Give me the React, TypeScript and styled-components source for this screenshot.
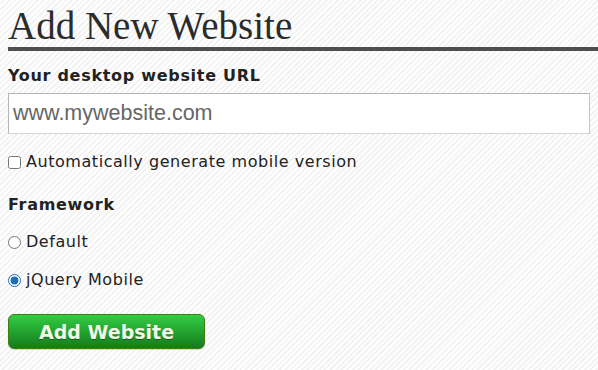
import React from "react";
import styled, { createGlobalStyle } from "styled-components";

const GlobalStyle = createGlobalStyle`
  html, body {
    margin: 0;
    padding: 0;
  }
  body {
    width: 598px;
    height: 370px;
    overflow: hidden;
    font-family: "DejaVu Sans", Verdana, sans-serif;
    color: #222;
    background-color: #fff;
    background-image: repeating-linear-gradient(
      135deg,
      #fff 0px,
      #fff 2px,
      #f3f3f3 2px,
      #f3f3f3 4px
    );
  }
`;

const Page = styled.form`
  padding: 0 0 0 8px;
  display: flex;
  flex-direction: column;
  align-items: flex-start;
`;

const Title = styled.h1`
  align-self: stretch;
  margin: 0;
  padding: 5px 0 0;
  font-family: "Liberation Serif", Georgia, serif;
  font-weight: normal;
  font-size: 39px;
  line-height: 42px;
  color: #2b2b2b;
  border-bottom: 4px solid #4f4f52;
`;

const Label = styled.label<{ $top: number }>`
  display: block;
  font-weight: bold;
  font-size: 16px;
  letter-spacing: 0.7px;
  line-height: 20px;
  color: #222;
  margin-top: ${(p) => p.$top}px;
`;

const UrlInput = styled.input`
  box-sizing: border-box;
  width: 582px;
  height: 41px;
  margin-top: 7px;
  padding: 0 4px;
  border: 1px solid #b5b5b5;
  border-bottom-color: #d4d4d4;
  border-right-color: #c4c4c4;
  background: #fff;
  font-family: "Liberation Sans", Arial, sans-serif;
  font-size: 21.5px;
  color: #666;
  outline: none;
`;

const OptionRow = styled.label<{ $top: number }>`
  display: flex;
  align-items: center;
  gap: 5px;
  margin-top: ${(p) => p.$top}px;
  font-size: 16px;
  letter-spacing: 0.55px;
  line-height: 20px;
  color: #222;
`;

const Box = styled.input`
  margin: 0;
  width: 13px;
  height: 13px;
  accent-color: #1e6fb5;
`;

const AddButton = styled.button`
  margin-top: 24px;
  width: 197px;
  height: 35px;
  border: 1px solid #3e7d12;
  border-radius: 6px;
  background: linear-gradient(#33cc44 0%, #24a831 45%, #167a1e 100%);
  box-shadow: 0 1px 1px rgba(0, 0, 0, 0.15);
  color: #f1f8e6;
  font-family: "DejaVu Sans", Verdana, sans-serif;
  font-weight: bold;
  font-size: 19px;
  text-shadow: 0 1px 0 rgba(0, 0, 0, 0.35);
  cursor: pointer;
  padding: 0;
`;

export default function App() {
  return (
    <>
      <GlobalStyle />
      <Page onSubmit={(e) => e.preventDefault()}>
        <Title>Add New Website</Title>
        <Label $top={15} htmlFor="url">
          Your desktop website URL
        </Label>
        <UrlInput id="url" type="text" defaultValue="www.mywebsite.com" />
        <OptionRow $top={18}>
          <Box type="checkbox" />
          Automatically generate mobile version
        </OptionRow>
        <Label $top={23}>Framework</Label>
        <OptionRow $top={17}>
          <Box type="radio" name="framework" value="default" />
          Default
        </OptionRow>
        <OptionRow $top={18}>
          <Box type="radio" name="framework" value="jqm" defaultChecked />
          jQuery Mobile
        </OptionRow>
        <AddButton type="submit">Add Website</AddButton>
      </Page>
    </>
  );
}
